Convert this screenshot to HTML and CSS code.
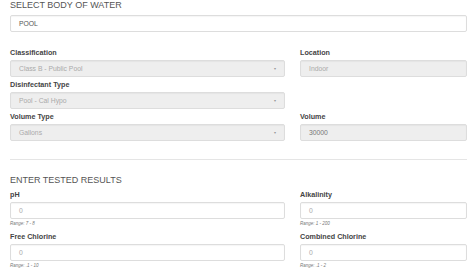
FILE: index.html
```html
<!DOCTYPE html>
<html lang="en">
<head>
    <meta charset="UTF-8">
    <meta name="viewport" content="width=device-width, initial-scale=1.0">
    <title>Water Test</title>
    <link rel="stylesheet" href="styles.css">
</head>
<body>
    <h3 class="section-title first">SELECT BODY OF WATER</h3>
    <div class="form-control">POOL</div>

    <div class="form-grid">
        <div class="form-group">
            <label>Classification</label>
            <div class="form-control disabled select">Class B - Public Pool<span class="caret">&#9662;</span></div>
        </div>
        <div class="form-group">
            <label>Location</label>
            <div class="form-control disabled">Indoor</div>
        </div>
        <div class="form-group">
            <label>Disinfectant Type</label>
            <div class="form-control disabled select">Pool - Cal Hypo<span class="caret">&#9662;</span></div>
        </div>
        <div class="form-group"></div>
        <div class="form-group">
            <label>Volume Type</label>
            <div class="form-control disabled select">Gallons<span class="caret">&#9662;</span></div>
        </div>
        <div class="form-group">
            <label>Volume</label>
            <div class="form-control disabled dark">30000</div>
        </div>
    </div>

    <hr>

    <h3 class="section-title">ENTER TESTED RESULTS</h3>
    <div class="form-grid results">
        <div class="form-group">
            <label>pH</label>
            <div class="form-control muted">0</div>
            <small class="range">Range: 7 - 8</small>
        </div>
        <div class="form-group">
            <label>Alkalinity</label>
            <div class="form-control muted">0</div>
            <small class="range">Range: 1 - 200</small>
        </div>
        <div class="form-group">
            <label>Free Chlorine</label>
            <div class="form-control muted">0</div>
            <small class="range">Range: .1 - 10</small>
        </div>
        <div class="form-group">
            <label>Combined Chlorine</label>
            <div class="form-control muted">0</div>
            <small class="range">Range: .1 - 2</small>
        </div>
    </div>
</body>
</html>
```

FILE: styles.css
```css
body {
    margin: 0;
    padding: 0 7px 0 10px;
    font-family: "Liberation Sans", Arial, sans-serif;
    color: #333;
    background-color: #fff;
    overflow: hidden;
}
.section-title {
    font-size: 9px;
    font-weight: normal;
    line-height: 11px;
    color: #555;
    margin: 0 0 4px 0;
}
.section-title.first {
    margin-top: 0;
}
.form-control {
    box-sizing: border-box;
    height: 17px;
    line-height: 15px;
    padding: 0 8px;
    font-size: 6.8px;
    color: #555;
    background-color: #fff;
    border: 1px solid #ddd;
    border-radius: 2px;
    box-shadow: inset 0 1px 1px rgba(0,0,0,0.04);
}
.form-control.disabled {
    background-color: #eee;
    color: #aaa;
}
.form-control.dark {
    color: #777;
}
.form-control.muted {
    color: #aaa;
}
.select {
    display: flex;
    justify-content: space-between;
}
.caret {
    font-size: 4px;
    color: #999;
}
.form-grid {
    display: grid;
    grid-template-columns: 275px 1fr;
    column-gap: 15px;
    row-gap: 3px;
    margin-top: 16px;
}
label {
    display: block;
    font-size: 7.2px;
    font-weight: bold;
    line-height: 10px;
    color: #444;
    margin-bottom: 2px;
}
.results {
    margin-top: 0;
    row-gap: 5px;
}
.range {
    display: block;
    font-size: 4.5px;
    font-style: italic;
    color: #777;
    line-height: 7px;
    margin-top: 1px;
}
hr {
    border: none;
    border-top: 1px solid #e5e5e5;
    margin: 18px 0 15px 0;
}
```
